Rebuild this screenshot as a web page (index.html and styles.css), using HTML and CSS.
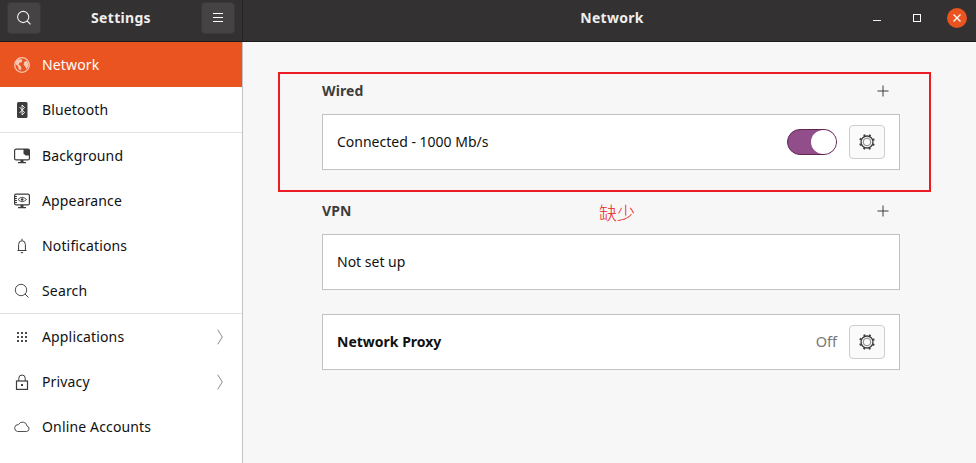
FILE: index.html
```html
<!DOCTYPE html>
<html lang="en">
<head>
  <meta charset="UTF-8">
  <meta name="viewport" content="width=device-width, initial-scale=1.0">
  <title>Settings</title>
  <link rel="stylesheet" href="styles.css">
</head>
<body>
  <svg class="defs" width="0" height="0">
    <symbol id="gear" viewBox="0 0 18 18">
      <circle cx="9" cy="9" r="6" fill="none" stroke="#3d3d3d" stroke-width="1.300"/>
      <circle cx="9" cy="9" r="3.800" fill="none" stroke="#777" stroke-width="0.900"/>
      <circle cx="9" cy="9" r="7.200" fill="none" stroke="#3d3d3d" stroke-width="1.500" stroke-dasharray="2 3.650" stroke-dashoffset="-1.830"/>
    </symbol>
    <symbol id="plus" viewBox="0 0 12 12">
      <path d="M6 .5v11M.5 6h11" stroke="#3d3d3d" stroke-width="1" fill="none"/>
    </symbol>
    <symbol id="chevron" viewBox="0 0 6 16">
      <path d="M.7 .7l4.600 7.300-4.600 7.300" stroke="#8a8a8a" stroke-width="1" fill="none"/>
    </symbol>
  </svg>

  <header class="titlebar">
    <div class="titlebar-left">
      <button class="head-btn">
        <svg width="16" height="16" viewBox="0 0 16 16"><circle cx="7.200" cy="7" r="5.600" fill="none" stroke="#eee" stroke-width="1.100"/><path d="M11.200 11l3.300 3.300" stroke="#eee" stroke-width="1.200"/></svg>
      </button>
      <span class="head-title">Settings</span>
      <button class="head-btn">
        <svg width="12" height="10" viewBox="0 0 12 10"><path d="M1 .5h10M1 4.500h10M1 8.500h10" stroke="#fff" stroke-width="1"/></svg>
      </button>
    </div>
    <div class="titlebar-main">
      <span class="head-title">Network</span>
      <div class="win-controls">
        <svg width="10" height="10" viewBox="0 0 10 10"><path d="M1 7.500h8" stroke="#eee" stroke-width="1"/></svg>
        <svg width="10" height="10" viewBox="0 0 10 10"><rect x="1.500" y="1.500" width="7" height="7" fill="none" stroke="#fff" stroke-width="1"/></svg>
        <span class="win-close">
          <svg width="10" height="10" viewBox="0 0 10 10"><path d="M1.500 1.500l7 7M8.500 1.500l-7 7" stroke="#fff" stroke-width="1.300"/></svg>
        </span>
      </div>
    </div>
  </header>

  <div class="window">
    <nav class="sidebar">
      <a class="nav-row active">
        <svg class="nav-icon" width="16" height="16" viewBox="0 0 16 16"><circle cx="8" cy="8" r="7.300" fill="none" stroke="#f7c8b4" stroke-width="1.300"/><path d="M3.500 2.800l3.500-.8 1.500 1.600-1.200 1.800-2 .4-.6 2 1.800 1 1 2.600-1.100 2.200-1.800-1.600-.6-3L1.600 7.200 2 4.500zM10 5l2.800-1.200 1.600 3.200-.4 2.800-1.500 2.400-1.200-2.800-1.600-1.400z" fill="#f7c8b4"/></svg>
        <span>Network</span>
      </a>
      <a class="nav-row">
        <svg class="nav-icon" width="16" height="16" viewBox="0 0 16 16"><rect x="3" y="0" width="10.500" height="16" rx="1.500" fill="#3d3d3d"/><path d="M5.500 5l5 5.500-2.400 2.500V3l2.400 2.500-5 5.500" stroke="#fff" stroke-width=".9" fill="none"/></svg>
        <span>Bluetooth</span>
      </a>
      <hr class="nav-sep">
      <a class="nav-row">
        <svg class="nav-icon" width="16" height="16" viewBox="0 0 16 16"><rect x=".6" y="1.100" width="14.800" height="10.800" rx="1.500" fill="none" stroke="#3d3d3d" stroke-width="1.200"/><path d="M9.500 1h5l1 1v5.500h-4l-2-2z" fill="#3d3d3d"/><path d="M6.500 12h3v2h-3zM4 14h8v1.200H4z" fill="#3d3d3d"/></svg>
        <span>Background</span>
      </a>
      <a class="nav-row">
        <svg class="nav-icon" width="16" height="16" viewBox="0 0 16 16"><rect x=".6" y="1.100" width="14.800" height="10.800" rx="1.500" fill="none" stroke="#3d3d3d" stroke-width="1.200"/><path d="M1 3.500h2M1 5.500h2M1 7.500h2M1 9.500h2" stroke="#3d3d3d"/><path d="M4 6.500q4-4.400 8.500 0-4.500 4.400-8.500 0z" fill="none" stroke="#3d3d3d" stroke-width=".9"/><circle cx="8.200" cy="6.500" r="1.300" fill="#3d3d3d"/><path d="M6.500 12h3v2h-3zM4 14h8v1.200H4z" fill="#3d3d3d"/></svg>
        <span>Appearance</span>
      </a>
      <a class="nav-row">
        <svg class="nav-icon" width="16" height="16" viewBox="0 0 16 16"><path d="M3.500 12.500h9M4.600 12.500V6.600a3.400 3.900 0 0 1 6.800 0v5.900" fill="none" stroke="#3d3d3d" stroke-width="1"/><path d="M8 .8v1.400" stroke="#3d3d3d"/><path d="M6.500 14h3L8 15.500z" fill="#3d3d3d"/></svg>
        <span>Notifications</span>
      </a>
      <a class="nav-row">
        <svg class="nav-icon" width="16" height="16" viewBox="0 0 16 16"><circle cx="7" cy="7" r="5.700" fill="none" stroke="#3d3d3d" stroke-width=".9"/><path d="M11 11l3.500 3.500" stroke="#3d3d3d" stroke-width="1"/></svg>
        <span>Search</span>
      </a>
      <hr class="nav-sep">
      <a class="nav-row">
        <svg class="nav-icon" width="16" height="16" viewBox="0 0 16 16"><path d="M3 3h2v2H3zM7 3h2v2H7zM11 3h2v2h-2zM3 7h2v2H3zM7 7h2v2H7zM11 7h2v2h-2zM3 11h2v2H3zM7 11h2v2H7zM11 11h2v2h-2z" fill="#4a4a4a"/></svg>
        <span>Applications</span>
        <svg class="nav-chevron" width="6" height="16"><use href="#chevron"/></svg>
      </a>
      <a class="nav-row">
        <svg class="nav-icon" width="16" height="16" viewBox="0 0 16 16"><rect x="2.500" y="7" width="11" height="8.400" fill="none" stroke="#3d3d3d" stroke-width="1.200"/><path d="M4.800 7V4.200a3.200 3.200 0 0 1 6.400 0V7" fill="none" stroke="#3d3d3d" stroke-width="1"/><rect x="7" y="10" width="2" height="2" fill="#3d3d3d"/></svg>
        <span>Privacy</span>
        <svg class="nav-chevron" width="6" height="16"><use href="#chevron"/></svg>
      </a>
      <a class="nav-row">
        <svg class="nav-icon" width="16" height="16" viewBox="0 0 16 16"><path d="M3.400 12.500h9.100a2.800 2.800 0 0 0 .5-5.500 4.500 4.500 0 0 0-8.500-1.400 3.500 3.500 0 0 0-1.100 6.900z" fill="none" stroke="#3d3d3d" stroke-width=".9"/></svg>
        <span>Online Accounts</span>
      </a>
    </nav>

    <main class="content">
      <div class="content-col">
        <div class="section-head">
          <h2>Wired</h2>
          <svg width="12" height="12"><use href="#plus"/></svg>
        </div>
        <div class="card">
          <span class="card-text">Connected - 1000 Mb/s</span>
          <div class="card-end">
            <span class="switch"><span class="switch-knob"></span></span>
            <button class="gear-btn"><svg width="18" height="18"><use href="#gear"/></svg></button>
          </div>
        </div>

        <div class="section-head vpn-head">
          <h2>VPN</h2>
          <svg width="12" height="12"><use href="#plus"/></svg>
        </div>
        <div class="card">
          <span class="card-text">Not set up</span>
        </div>

        <div class="card proxy-card">
          <strong class="card-text">Network Proxy</strong>
          <div class="card-end">
            <span class="card-text muted">Off</span>
            <button class="gear-btn"><svg width="18" height="18"><use href="#gear"/></svg></button>
          </div>
        </div>
      </div>

      <div class="red-box"></div>
      <span class="red-note">缺少</span>
    </main>
  </div>
</body>
</html>
```

FILE: styles.css
```css
* {
  box-sizing: border-box;
}

body {
  margin: 0;
  width: 976px;
  height: 463px;
  overflow: hidden;
  font-family: "Noto Sans", "Open Sans", sans-serif;
  font-size: 14px;
  color: #111;
  background: #f7f7f7;
}

.defs {
  position: absolute;
}

.titlebar {
  display: flex;
  height: 42px;
  background: #333131;
  border-bottom: 1px solid #1d1b1b;
  color: #eee;
}

.titlebar-left {
  width: 243px;
  flex: none;
  display: flex;
  justify-content: space-between;
  align-items: flex-start;
  padding: 2px 7px 0;
  border-right: 1px solid #242222;
}

.titlebar-left .head-title {
  line-height: 32px;
}

.head-title {
  font-weight: 700;
  font-size: 14px;
  letter-spacing: 0.3px;
}

.head-btn {
  width: 34px;
  height: 32px;
  padding: 0;
  display: flex;
  align-items: center;
  justify-content: center;
  background: #454343;
  border: 1px solid #3a3838;
  border-radius: 4px;
}

.titlebar-main {
  flex: 1;
  display: flex;
  align-items: center;
  justify-content: center;
  position: relative;
  padding: 0 0 6px 5px;
}

.win-controls {
  position: absolute;
  top: 8px;
  right: 9px;
  display: flex;
  align-items: center;
  gap: 30px;
}

.win-close {
  width: 20px;
  height: 20px;
  margin-left: -5px;
  border-radius: 50%;
  background: #e95420;
  display: flex;
  align-items: center;
  justify-content: center;
}

.window {
  display: flex;
  height: 421px;
}

.sidebar {
  width: 243px;
  flex: none;
  background: #fff;
  border-right: 1px solid #c4c4c4;
  letter-spacing: 0.15px;
}

.nav-row {
  display: flex;
  align-items: center;
  height: 45px;
  padding: 0 19px 0 14px;
  gap: 12px;
}

.nav-row.active {
  background: #e95420;
  color: #fff;
}

.nav-chevron {
  margin-left: auto;
}

.nav-sep {
  margin: 0;
  border: none;
  height: 1px;
  background: #e2e2e2;
}

.content {
  flex: 1;
  position: relative;
  background: #f7f7f7;
}

.content-col {
  width: 578px;
  margin-left: 79px;
  padding-top: 37px;
}

.section-head {
  display: flex;
  justify-content: space-between;
  align-items: center;
  height: 24px;
  margin-bottom: 11px;
  padding-right: 11px;
}

.section-head h2 {
  margin: 0 0 2px;
  font-size: 14px;
  font-weight: 700;
  color: #3d3d3d;
  letter-spacing: 0.1px;
}

.vpn-head {
  margin-top: 29px;
}

.card {
  display: flex;
  align-items: center;
  justify-content: space-between;
  height: 56px;
  padding: 0 14px;
  background: #fff;
  border: 1px solid #c2c2c2;
}

.card-text {
  padding-bottom: 2px;
}

.proxy-card {
  margin-top: 24px;
}

.card-end {
  display: flex;
  align-items: center;
  gap: 12px;
}

.muted {
  color: #777;
  font-size: 14.5px;
}

.switch {
  display: block;
  width: 50px;
  height: 26px;
  border-radius: 13px;
  background: #924d8b;
  border: 1px solid #5e2750;
  position: relative;
}

.switch-knob {
  position: absolute;
  top: 0;
  right: 0;
  width: 25px;
  height: 24px;
  border-radius: 50%;
  background: #fff;
}

.gear-btn {
  width: 36px;
  height: 34px;
  padding: 0;
  display: flex;
  align-items: center;
  justify-content: center;
  background: #fafafa;
  border: 1px solid #cdcdcd;
  border-radius: 4px;
}

.red-box {
  position: absolute;
  left: 35px;
  top: 30px;
  width: 653px;
  height: 120px;
  border: 2px solid #ed1c24;
}

.red-note {
  position: absolute;
  left: 356px;
  top: 157px;
  font-family: "Noto Sans CJK SC", sans-serif;
  font-size: 18px;
  font-weight: 300;
  color: #ed1c24;
}
```
